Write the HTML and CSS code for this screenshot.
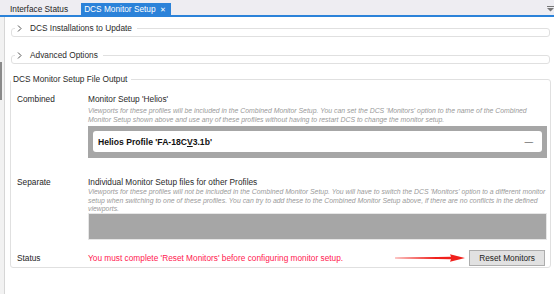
FILE: index.html
```html
<!DOCTYPE html>
<html lang="en">
<head>
  <meta charset="UTF-8">
  <title>DCS Monitor Setup</title>
  <link rel="stylesheet" href="styles.css">
</head>
<body>
  <div class="tabstrip">
    <div class="tab">Interface Status</div>
    <div class="tab active">DCS Monitor Setup <span class="tab-close">&#10005;</span></div>
    <svg class="overflow" width="7" height="6" viewBox="0 0 7 6">
      <rect x="0" y="0" width="7" height="1" fill="#777"/>
      <path d="M0 2 L7 2 L3.5 5.5 Z" fill="#777"/>
    </svg>
  </div>
  <div class="main">
    <div class="side">
      <div class="side-thumb"></div>
    </div>
    <div class="page">
      <fieldset class="expander">
        <legend><svg class="chev" width="5" height="7" viewBox="0 0 5 7"><path d="M1 0.5 L4 3.5 L1 6.5" fill="none" stroke="#555" stroke-width="1"/></svg>DCS Installations to Update</legend>
      </fieldset>
      <fieldset class="expander second">
        <legend><svg class="chev" width="5" height="7" viewBox="0 0 5 7"><path d="M1 0.5 L4 3.5 L1 6.5" fill="none" stroke="#555" stroke-width="1"/></svg>Advanced Options</legend>
      </fieldset>
      <fieldset class="group">
        <legend>DCS Monitor Setup File Output</legend>

        <div class="row">
          <div class="label">Combined</div>
          <div class="cell">
            <div class="title">Monitor Setup 'Helios'</div>
            <p class="desc">Viewports for these profiles will be included in the Combined Monitor Setup. You can set the DCS 'Monitors' option to the name of the Combined<br>Monitor Setup shown above and use any of these profiles without having to restart DCS to change the monitor setup.</p>
            <div class="list">
              <div class="item">
                <span>Helios Profile 'FA-18C<u>V</u>3.1b'</span>
                <span class="dash">&mdash;</span>
              </div>
            </div>
          </div>
        </div>

        <div class="row separate">
          <div class="label">Separate</div>
          <div class="cell">
            <div class="title">Individual Monitor Setup files for other Profiles</div>
            <p class="desc tight">Viewports for these profiles will not be included in the Combined Monitor Setup. You will have to switch the DCS 'Monitors' option to a different monitor<br>setup when switching to one of these profiles. You can try to add these to the Combined Monitor Setup above, if there are no conflicts in the defined<br>viewports.</p>
            <div class="list empty"></div>
          </div>
        </div>

        <div class="row status-row">
          <div class="label">Status</div>
          <div class="cell status">
            <span class="error">You must complete 'Reset Monitors' before configuring monitor setup.</span>
            <svg class="arrow" width="70" height="8" viewBox="0 0 70 8">
              <path d="M0 3.7 L56 2.7 L55 0.3 L70 4 L55 7.7 L56 5.3 L0 4.3 Z" fill="#f0201c"/>
            </svg>
            <button class="btn">Reset Monitors</button>
          </div>
        </div>
      </fieldset>
    </div>
  </div>
</body>
</html>
```

FILE: styles.css
```css
* {
  margin: 0;
  padding: 0;
  box-sizing: border-box;
}
body {
  font-family: 'Liberation Sans', Arial, sans-serif;
  font-size: 8.3px;
  color: #1e1e1e;
  background: #ffffff;
  width: 554px;
  height: 294px;
  overflow: hidden;
}
.tabstrip {
  height: 17px;
  background: #eeedf2;
  border-bottom: 2px solid #2b82d9;
  display: flex;
  align-items: flex-end;
  padding-left: 7px;
  position: relative;
}
.tab {
  height: 12px;
  line-height: 12px;
  padding: 0 3px;
  margin-right: 10px;
  color: #1e1e1e;
}
.tab.active {
  background: #2b82d9;
  color: #ffffff;
  padding: 0 5px 0 3px;
}
.tab-close {
  font-size: 6.5px;
  margin-left: 2px;
}
.overflow {
  position: absolute;
  right: 0;
  top: 6px;
}
.main {
  display: flex;
  height: 277px;
}
.side {
  width: 5px;
  flex-shrink: 0;
  background: #f2f2f2;
  border-right: 1px solid #d6d6d6;
  position: relative;
}
.side-thumb {
  position: absolute;
  left: 0;
  top: 45px;
  width: 2px;
  height: 38px;
  background: #8a8a8a;
}
.page {
  flex: 1;
  min-width: 0;
  padding: 6px 3px 0 5px;
}
fieldset {
  border: 1px solid #e0e0e0;
  border-radius: 3px;
  min-width: 0;
}
.expander {
  height: 14px;
  margin: 0 1px 0 1px;
  padding: 0;
}
.expander legend {
  margin-left: 3px;
  padding: 0 5px 0 2px;
  line-height: 10px;
  color: #2a2a2a;
}
.expander.second {
  margin-top: 13px;
}
.chev {
  margin-right: 8px;
  vertical-align: -0.5px;
}
.group {
  margin-top: 10px;
  height: 194px;
  padding: 9px 0 0 6px;
}
.group legend {
  margin-left: -6px;
  padding: 0 4px 0 2px;
  line-height: 10px;
  color: #2a2a2a;
}
.row {
  display: flex;
  align-items: flex-start;
}
.label {
  width: 71px;
  flex-shrink: 0;
  line-height: 12px;
}
.cell {
  flex: 1;
  min-width: 0;
  padding-right: 3px;
}
.title {
  line-height: 12px;
  color: #2a2a2a;
}
.desc {
  font-size: 6.9px;
  font-style: italic;
  color: #9a9a9a;
  line-height: 8.7px;
  margin-top: 2px;
  white-space: nowrap;
}
.desc.tight {
  line-height: 8.3px;
  margin-top: 0;
}
.list {
  background: #a6a6a6;
  margin-top: 2px;
  height: 32px;
  padding: 5px 5px 0 5px;
}
.list.empty {
  height: 27px;
  margin-top: 0;
  border: 1px solid #e6e6e6;
}
.item {
  background: #ffffff;
  height: 21px;
  border-radius: 3px;
  display: flex;
  align-items: center;
  justify-content: space-between;
  padding: 0 9px 0 5px;
  font-weight: bold;
  font-size: 8.6px;
  color: #111;
}
.dash {
  font-weight: normal;
  color: #333;
}
.separate {
  margin-top: 18px;
}
.status-row {
  margin-top: 10px;
  align-items: center;
}
.status {
  display: flex;
  align-items: center;
}
.error {
  color: #ff2050;
  white-space: nowrap;
}
.arrow {
  margin-left: 52px;
}
.btn {
  margin-left: 4px;
  width: 76px;
  height: 16px;
  background: #e1e1e1;
  border: 1px solid #adadad;
  font-family: inherit;
  font-size: 8.3px;
  color: #222;
}
```
